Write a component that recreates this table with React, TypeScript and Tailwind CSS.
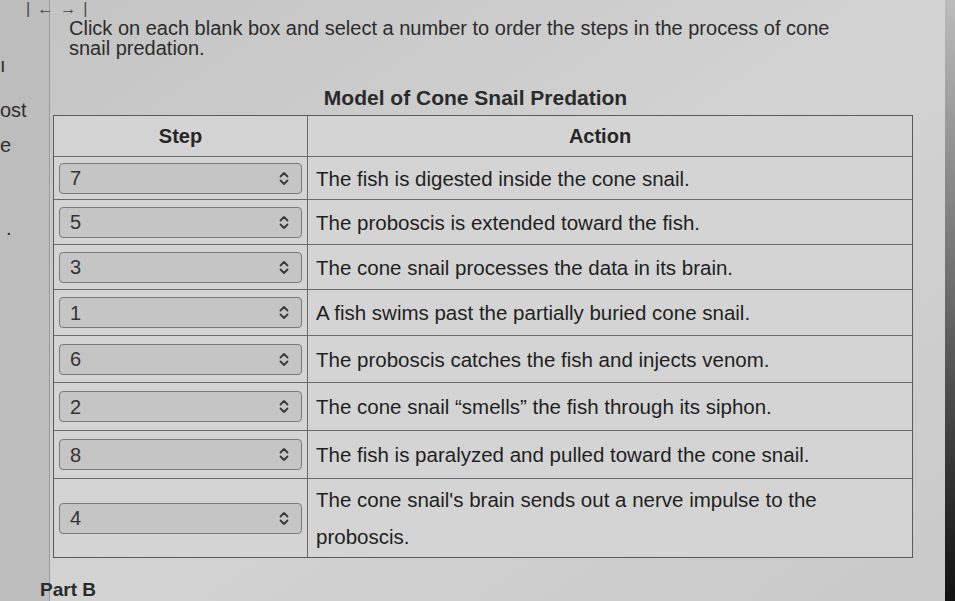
import React from "react";

const rows: { n: string; text: React.ReactNode; h: string }[] = [
  { n: "7", text: "The fish is digested inside the cone snail.", h: "h-[43px]" },
  { n: "5", text: "The proboscis is extended toward the fish.", h: "h-[45px]" },
  { n: "3", text: "The cone snail processes the data in its brain.", h: "h-[45px]" },
  { n: "1", text: "A fish swims past the partially buried cone snail.", h: "h-[46px]" },
  { n: "6", text: "The proboscis catches the fish and injects venom.", h: "h-[47px]" },
  { n: "2", text: "The cone snail \u201csmells\u201d the fish through its siphon.", h: "h-[48px]" },
  { n: "8", text: "The fish is paralyzed and pulled toward the cone snail.", h: "h-[48px]" },
  {
    n: "4",
    text: (
      <>
        The cone snail's brain sends out a nerve impulse to the
        <br />
        proboscis.
      </>
    ),
    h: "h-[78px]",
  },
];

function Chevrons() {
  return (
    <svg width="12" height="17" viewBox="0 0 12 17" fill="none" stroke="#3a3a3a" strokeWidth="1.8" strokeLinecap="round" strokeLinejoin="round">
      <path d="M2.5 6.5 L6 3 L9.5 6.5" />
      <path d="M2.5 10.5 L6 14 L9.5 10.5" />
    </svg>
  );
}

export default function App() {
  return (
    <div
      className="relative w-[955px] h-[601px] overflow-hidden flex bg-[#c6c6c6] text-[#262626]"
      style={{ fontFamily: '"Liberation Sans", Arial, sans-serif' }}
    >
      {/* left sidebar strip */}
      <div className="w-[50px] shrink-0 h-full bg-[#bdbdbd] border-r border-[#9a9a9a] relative text-[20px] text-[#2e2e2e]">
        <div className="absolute left-0 top-[55px] leading-none">ı</div>
        <div className="absolute left-0 top-[100px] leading-none">ost</div>
        <div className="absolute left-0 top-[135px] leading-none">e</div>
        <div className="absolute left-[6px] top-[218px] leading-none">.</div>
      </div>

      {/* main */}
      <div className="flex-1 h-full bg-gradient-to-br from-[#c4c4c4] via-[#d3d3d3] to-[#c9c9c9] relative">
        <div className="absolute left-[-24px] top-0 text-[16px] leading-[18px] text-[#444] tracking-[7px]">|←→|</div>

        <div className="pl-[19px] pt-[18px] text-[20px] leading-[20px] text-[#2c2c2c]">
          <p>Click on each blank box and select a number to order the steps in the process of cone</p>
          <p>snail predation.</p>
        </div>

        <div className="mt-[29px] text-center font-bold text-[21px] leading-[22px] text-[#2a2a2a] pr-[54px]">
          Model of Cone Snail Predation
        </div>

        <div className="ml-[3px] mt-[6px] w-[860px] border border-[#5a5a5a] bg-[#d4d4d4]">
          <div className="flex h-[41px] border-b border-[#6a6a6a] font-bold text-[20px]">
            <div className="w-[254px] shrink-0 border-r border-[#6a6a6a] flex items-center justify-center">Step</div>
            <div className="flex-1 flex items-center justify-center pr-[20px]">Action</div>
          </div>
          {rows.map((r, i) => (
            <div
              key={i}
              className={`flex ${r.h} ${i < rows.length - 1 ? "border-b border-[#6a6a6a]" : ""}`}
            >
              <div className="w-[254px] shrink-0 border-r border-[#6a6a6a] flex items-center px-[5px]">
                <div className="w-full h-[31px] rounded-[4px] border border-[#7a7a7a] bg-[#c5c5c5] flex items-center justify-between pl-[10px] pr-[11px] text-[20px] text-[#333]">
                  <span>{r.n}</span>
                  <Chevrons />
                </div>
              </div>
              <div className="flex-1 flex items-center pl-[8px] text-[20.5px] leading-[37px] text-[#1f1f1f]">
                <span>{r.text}</span>
              </div>
            </div>
          ))}
        </div>

        <div className="mt-[22px] -ml-[10px] font-bold text-[19px] leading-[20px] text-[#2a2a2a]">Part B</div>

        <div className="absolute right-0 top-0 h-full w-[10px] bg-gradient-to-b from-[#bcbcbc] via-[#6a6a6a] to-[#111]" />
      </div>
    </div>
  );
}
